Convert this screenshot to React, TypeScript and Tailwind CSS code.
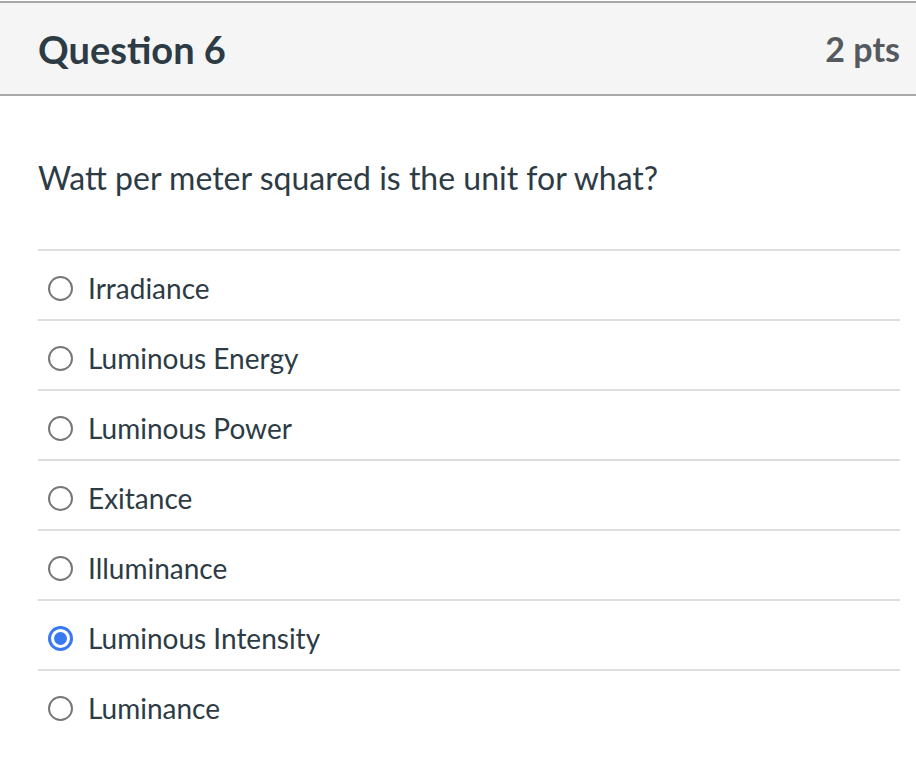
const options = [
  'Irradiance',
  'Luminous Energy',
  'Luminous Power',
  'Exitance',
  'Illuminance',
  'Luminous Intensity',
  'Luminance',
]

const selected = 'Luminous Intensity'

function Radio({ checked }: { checked: boolean }) {
  if (checked) {
    return (
      <span className="flex h-[25px] w-[25px] shrink-0 items-center justify-center rounded-full border-[3px] border-[#3a78f2] bg-white">
        <span className="h-[13px] w-[13px] rounded-full bg-[#3a78f2]" />
      </span>
    )
  }
  return <span className="h-[25px] w-[25px] shrink-0 rounded-full border-[2.5px] border-[#777777] bg-white" />
}

export default function App() {
  return (
    <div className="min-h-screen bg-white text-[#2d3b45]" style={{ fontFamily: 'Lato, "Open Sans", sans-serif' }}>
      {/* Question header */}
      <div className="mt-px flex h-[95px] items-center justify-between border-y-2 border-[#a8a8a8] bg-[#f5f5f5] pl-[38px] pr-[16px]">
        <h2 className="text-[38px] font-bold leading-none">Question 6</h2>
        <span className="text-[34px] font-bold leading-none text-[#555a5e]">2 pts</span>
      </div>

      <div className="pl-[38px] pr-[16px]">
        <p className="pt-[58px] pb-[47px] text-[32px] leading-[48px]">Watt per meter squared is the unit for what?</p>

        <div>
          {options.map((opt) => (
            <label key={opt} className="flex h-[70px] items-center gap-[15px] border-t-2 border-[#dddddd] pl-[10px] pt-[6px]">
              <Radio checked={opt === selected} />
              <span className="text-[28px] leading-none">{opt}</span>
            </label>
          ))}
        </div>
      </div>
    </div>
  )
}
